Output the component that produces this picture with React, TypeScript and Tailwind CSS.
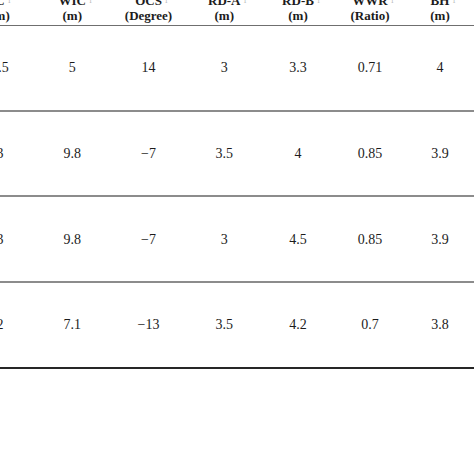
import React from "react";

const headers = [
  { name: "C", unit: "(m)" },
  { name: "WIC", unit: "(m)" },
  { name: "OCS", unit: "(Degree)" },
  { name: "RD-A", unit: "(m)" },
  { name: "RD-B", unit: "(m)" },
  { name: "WWR", unit: "(Ratio)" },
  { name: "BH", unit: "(m)" },
];

const rows = [
  ["1.5", "5", "14", "3", "3.3", "0.71", "4"],
  ["3", "9.8", "\u22127", "3.5", "4", "0.85", "3.9"],
  ["3", "9.8", "\u22127", "3", "4.5", "0.85", "3.9"],
  ["2", "7.1", "\u221213", "3.5", "4.2", "0.7", "3.8"],
];

const cols = "grid grid-cols-[69px_75.5px_77px_74.5px_73px_71px_69px]";

export default function App() {
  return (
    <div className="w-[474px] h-[474px] overflow-hidden bg-white text-[#1c1c1c] font-['Liberation_Serif',serif]">
      <div className="-ml-[34.5px] w-[509px] -mt-[7px]">
        <div className={`${cols} h-[33px] border-b-[1.5px] border-[#6f6f6f] text-[13px] font-bold leading-[15px]`}>
          {headers.map((h) => (
            <div key={h.name} className="flex flex-col items-center">
              <span className="relative">
                {h.name}
                <span className="absolute -right-[6px] top-[1px] text-[6px] font-normal text-[#aaa]">1</span>
              </span>
              <span>{h.unit}</span>
            </div>
          ))}
        </div>
        {rows.map((r, i) => (
          <div
            key={i}
            className={`${cols} h-[85.7px] items-center text-[14px] ${
              i === rows.length - 1 ? "border-b-[2.5px] border-[#262626]" : "border-b-2 border-[#8c8c8c]"
            }`}
          >
            {r.map((v, j) => (
              <div key={j} className="text-center">
                {v}
              </div>
            ))}
          </div>
        ))}
      </div>
    </div>
  );
}
